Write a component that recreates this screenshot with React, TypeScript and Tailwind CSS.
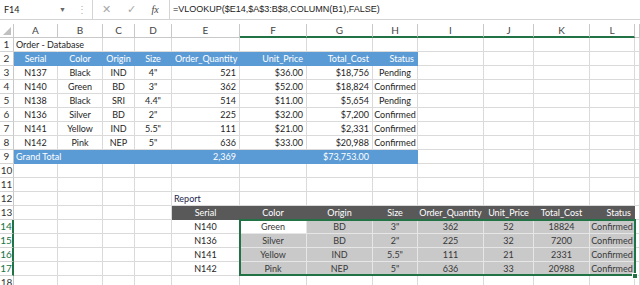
import React from 'react';

type Kind = 'plain' | 'blue' | 'dark' | 'gray' | 'sel';
type Cell = { t?: string; a?: 'l' | 'c' | 'r'; kind?: Kind; ov?: boolean; tone?: string };

const letters = ['A', 'B', 'C', 'D', 'E', 'F', 'G', 'H', 'I', 'J', 'K', 'L', ''];

const orders = [
  ['N137', 'Black', 'IND', '4"', '521', '$36.00', '$18,756', 'Pending'],
  ['N140', 'Green', 'BD', '3"', '362', '$52.00', '$18,824', 'Confirmed'],
  ['N138', 'Black', 'SRI', '4.4"', '514', '$11.00', '$5,654', 'Pending'],
  ['N136', 'Silver', 'BD', '2"', '225', '$32.00', '$7,200', 'Confirmed'],
  ['N141', 'Yellow', 'IND', '5.5"', '111', '$21.00', '$2,331', 'Confirmed'],
  ['N142', 'Pink', 'NEP', '5"', '636', '$33.00', '$20,988', 'Confirmed'],
];

const report = [
  ['N140', 'Green', 'BD', '3"', '362', '52', '18824', 'Confirmed'],
  ['N136', 'Silver', 'BD', '2"', '225', '32', '7200', 'Confirmed'],
  ['N141', 'Yellow', 'IND', '5.5"', '111', '21', '2331', 'Confirmed'],
  ['N142', 'Pink', 'NEP', '5"', '636', '33', '20988', 'Confirmed'],
];

const orderHead = ['Serial', 'Color', 'Origin', 'Size', 'Order_Quantity', 'Unit_Price', 'Total_Cost', 'Status'];

const buildRow = (r: number): Cell[] => {
  const cells: Cell[] = Array.from({ length: 13 }, () => ({}));
  if (r === 1) cells[0] = { t: 'Order - Database', a: 'l', ov: true };
  if (r === 2) {
    const al: Cell['a'][] = ['c', 'c', 'c', 'c', 'r', 'r', 'r', 'r'];
    orderHead.forEach((h, i) => (cells[i] = { t: h, a: al[i], kind: 'blue' }));
  }
  if (r >= 3 && r <= 8) {
    const al: Cell['a'][] = ['c', 'c', 'c', 'c', 'r', 'r', 'r', 'c'];
    orders[r - 3].forEach((v, i) => (cells[i] = { t: v, a: al[i] }));
  }
  if (r === 9) {
    for (let i = 0; i < 8; i++) cells[i] = { kind: 'blue' };
    cells[0] = { t: 'Grand Total', a: 'l', kind: 'blue', ov: true };
    cells[4] = { t: '2,369', a: 'r', kind: 'blue' };
    cells[6] = { t: '$73,753.00', a: 'r', kind: 'blue' };
  }
  if (r === 12) cells[4] = { t: 'Report', a: 'l', tone: 'text-[#26264d]' };
  if (r === 13) {
    orderHead.forEach((h, i) => (cells[i + 4] = { t: h, a: i === 7 ? 'r' : 'c', kind: 'dark' }));
  }
  if (r >= 14 && r <= 17) {
    report[r - 14].forEach((v, i) => {
      const kind: Kind = i === 0 ? 'plain' : r === 14 && i === 1 ? 'sel' : 'gray';
      cells[i + 4] = { t: v, a: 'c', kind };
    });
  }
  return cells;
};

const kindCls: Record<Kind, string> = {
  plain: 'bg-white border-[#dadada] text-[#1e1e1e]',
  blue: 'bg-[#5b9bd5] border-[#5b9bd5] text-white',
  dark: 'bg-[#595959] border-[#595959] text-white',
  gray: 'bg-[#c9c9c9] border-[#e6e6e6] text-[#383838]',
  sel: 'bg-white border-[#e6e6e6] text-[#383838]',
};

const alignCls = { l: 'text-left px-[2px]', c: 'text-center px-0', r: 'text-right px-[3px]' };

const SheetCell: React.FC<{ cell: Cell }> = ({ cell }) => (
  <div
    className={`h-[14px] border-r border-b text-[9px] leading-[13px] whitespace-nowrap ${kindCls[cell.kind ?? 'plain']} ${
      alignCls[cell.a ?? 'l']
    } ${cell.ov ? 'relative z-[1] overflow-visible border-r-transparent' : 'overflow-hidden'} ${cell.tone ?? ''}`}
  >
    {cell.t}
  </div>
);

const rows = Array.from({ length: 18 }, (_, i) => i + 1);

export default function App() {
  return (
    <div className="w-[640px] h-[285px] overflow-hidden bg-white font-['Lato',sans-serif] text-[#1e1e1e]">
      {/* formula bar */}
      <div className="flex h-[20px] border-b border-[#d4d4d4] items-stretch">
        <div className="w-[72px] flex items-center justify-between pl-[4px] pr-[6px] text-[9px] text-[#222]">
          <span>F14</span>
          <span className="text-[7px] text-[#666]">▼</span>
        </div>
        <div className="w-[20px] flex items-center justify-center text-[10px] text-[#b0b0b0]">⋮</div>
        <div className="w-[77px] border-l border-[#d4d4d4] flex items-center text-[#a8a8a8]">
          <span className="w-[26px] text-center text-[11px]">✕</span>
          <span className="w-[24px] text-center text-[11px]">✓</span>
          <span className="w-[24px] text-center text-[10px] italic font-['Liberation_Serif',serif] text-[#444]">fx</span>
        </div>
        <div className="flex-1 border-l border-[#d4d4d4] flex items-center pl-[3px] text-[9px] text-[#222] font-['Liberation_Sans',sans-serif]">
          =VLOOKUP($E14,$A$3:B$8,COLUMN(B1),FALSE)
        </div>
      </div>

      {/* sheet */}
      <div className="relative mt-[4px] grid grid-cols-[14px_44px_45px_32px_37px_68px_67px_66px_45px_66px_50px_56px_45px_1fr]">
        <div className="relative h-[14px] border-r border-b border-[#c8c8c8] bg-white">
          <div className="absolute right-[2px] bottom-[2px] w-0 h-0 border-l-[8px] border-l-transparent border-b-[8px] border-b-[#c0c0c0]" />
        </div>
        {letters.map((l, i) => (
          <div
            key={`h${i}`}
            className={`h-[14px] border-r text-center text-[10px] leading-[13px] text-[#444] bg-white ${
              i >= 5 && i <= 11 ? 'border-b-2 border-b-[#217346] border-r-[#c8c8c8]' : 'border-b border-[#c8c8c8]'
            }`}
          >
            {l}
          </div>
        ))}
        {rows.map((r) => {
          const hi = r >= 14 && r <= 17;
          return (
            <React.Fragment key={r}>
              <div
                className={`h-[14px] border-b border-[#d4d4d4] text-center text-[10px] leading-[13px] bg-white ${
                  hi ? 'border-r-2 border-r-[#217346] text-[#217346]' : 'border-r border-r-[#c8c8c8] text-[#333]'
                }`}
              >
                {r}
              </div>
              {buildRow(r).map((c, i) => (
                <SheetCell key={i} cell={c} />
              ))}
            </React.Fragment>
          );
        })}
        {/* selection F14:L17 */}
        <div className="absolute left-[239px] top-[195px] w-[397px] h-[57px] border-2 border-[#217346] pointer-events-none z-[2]" />
        <div className="absolute left-[632px] top-[249px] w-[6px] h-[6px] bg-[#217346] border border-white z-[3]" />
      </div>
    </div>
  );
}
